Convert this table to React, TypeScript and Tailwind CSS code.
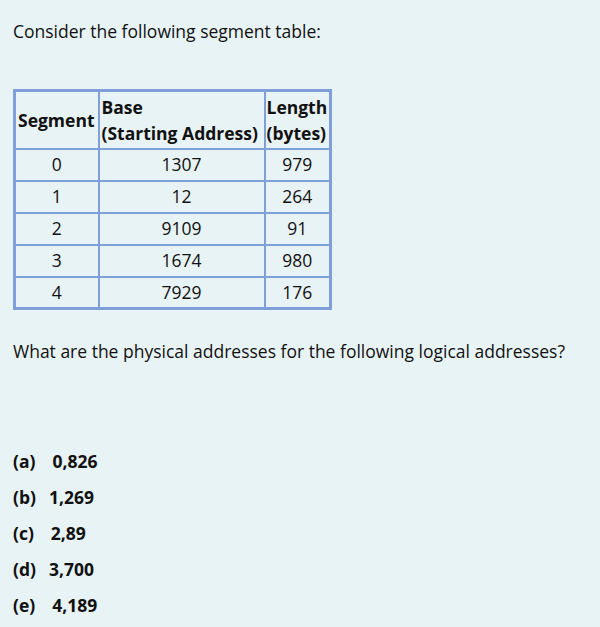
const rows = [
  { seg: '0', base: '1307', len: '979' },
  { seg: '1', base: '12', len: '264' },
  { seg: '2', base: '9109', len: '91' },
  { seg: '3', base: '1674', len: '980' },
  { seg: '4', base: '7929', len: '176' },
]

const options = [
  { label: '(a)', value: '0,826', gap: 'ml-[17px]' },
  { label: '(b)', value: '1,269', gap: 'ml-[13px]' },
  { label: '(c)', value: '2,89', gap: 'ml-[17px]' },
  { label: '(d)', value: '3,700', gap: 'ml-[13px]' },
  { label: '(e)', value: '4,189', gap: 'ml-[17px]' },
]

export default function App() {
  return (
    <div className="h-[627px] w-[600px] bg-[#e8f3f5] pl-[13px] pt-[19px] font-['Segoe_UI','Open_Sans',sans-serif] text-[17.5px] text-[#111]">
      <p className="leading-[24px]">Consider the following segment table:</p>

      <table className="mt-[46px] table-fixed border-collapse border-[3px] border-[#7f9fd8]">
        <thead>
          <tr className="h-[58px]">
            <th className="w-[84px] border-2 border-[#7f9fd8] pl-[2px] text-left align-middle font-bold leading-[26px]">
              Segment
            </th>
            <th className="w-[166px] border-2 border-[#7f9fd8] pl-[2px] text-left font-bold leading-[26px]">
              Base
              <br />
              (Starting Address)
            </th>
            <th className="w-[66px] border-2 border-[#7f9fd8] pl-[1px] text-left font-bold leading-[26px]">
              Length
              <br />
              (bytes)
            </th>
          </tr>
        </thead>
        <tbody>
          {rows.map((r) => (
            <tr key={r.seg} className="h-[32px]">
              <td className="border-2 border-[#7f9fd8] text-center">{r.seg}</td>
              <td className="border-2 border-[#7f9fd8] text-center">{r.base}</td>
              <td className="border-2 border-[#7f9fd8] text-center">{r.len}</td>
            </tr>
          ))}
        </tbody>
      </table>

      <p className="mt-[29px] leading-[24px]">
        What are the physical addresses for the following logical addresses?
      </p>

      <div className="mt-[86px] flex flex-col gap-[12px] font-bold">
        {options.map((o) => (
          <p key={o.label} className="leading-[24px]">
            {o.label}
            <span className={o.gap}>{o.value}</span>
          </p>
        ))}
      </div>
    </div>
  )
}
